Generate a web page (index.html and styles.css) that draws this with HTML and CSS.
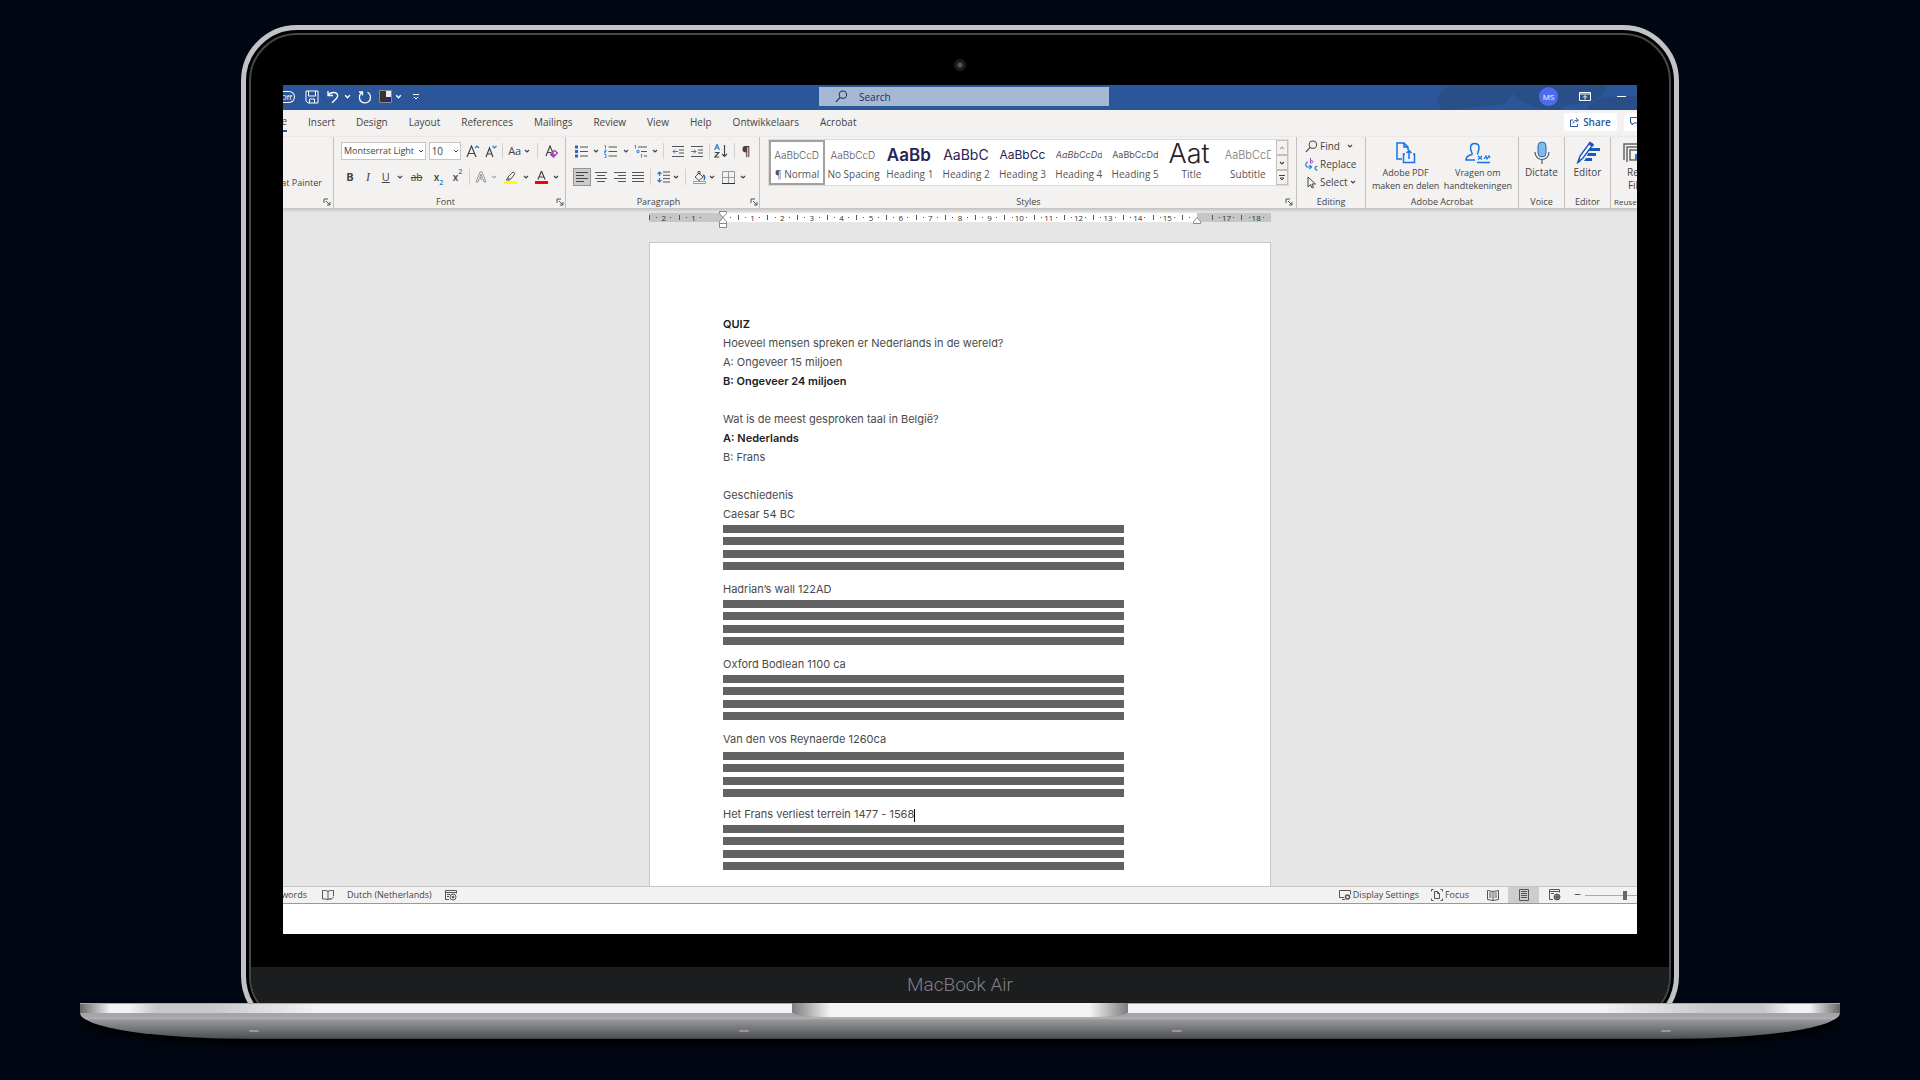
FILE: index.html
```html
<!DOCTYPE html>
<html lang="nl">
<head>
<meta charset="utf-8">
<title>Word - Quiz</title>
<link rel="stylesheet" href="styles.css">
</head>
<body>
<svg class="defs" aria-hidden="true">
  <symbol id="chev" viewBox="0 0 6 6"><path d="M1 2l2 2 2-2" fill="none" stroke="currentColor" stroke-width="1.2"/></symbol>
  <symbol id="launch" viewBox="0 0 8 8"><path d="M1 5V1h4M3 3l4 4M7 4v3H4" fill="none" stroke="#555" stroke-width="1"/></symbol>
  <symbol id="loupe" viewBox="0 0 14 14"><circle cx="8.500" cy="5" r="4" fill="none" stroke="currentColor" stroke-width="1.100"/><path d="M5.600 8L1 12.800" stroke="currentColor" stroke-width="1.200"/></symbol>
</svg>
<main class="laptop">
  <div class="lid-clip">
    <div class="lid">
      <div class="bezel">
        <div class="camera-row"><span class="camera"></span></div>
        <div class="screen">

          <header class="titlebar">
            <div class="quick">
              <button class="off" aria-label="AutoSave"><span>Off</span></button>
              <button class="b w22" aria-label="Save"><svg width="14" height="14" viewBox="0 0 14 14" fill="none" stroke="#fff"><path d="M1 1h12v12H3l-2-2zM3.500 1v5h7V1M4.500 13V9h5v4"/></svg></button>
              <button class="b w20" aria-label="Undo"><svg width="14" height="14" viewBox="0 0 14 14" fill="none" stroke="#fff" stroke-width="1.300"><path d="M2 1v4.500h5M2 5.500C4 2 11 1 11.700 5.500 12 8 9 9.500 6 12.800"/></svg></button>
              <button class="b w8" aria-label="Undo list"><svg width="7" height="7"><use href="#chev"/></svg></button>
              <button class="b w28" aria-label="Redo"><svg width="14" height="14" viewBox="0 0 14 14" fill="none" stroke="#fff" stroke-width="1.300"><path d="M1 2h3.500v3.500M4.200 2.500C0 5 .5 12.600 7 12.800 13.500 12.600 14 5 9.500 2.300"/></svg></button>
              <button class="b w12" aria-label="Theme"><svg width="13" height="13" viewBox="0 0 13 13"><path fill="#3a3232" d="M0 0h13v13H0z"/><path fill="#eee" d="M7 1h5v6H7z"/><path fill="#2b2a6c" d="M7 7h5v5H7z"/><path fill="none" stroke="#8a8a9c" d="M.5.5h12v12H.5z"/></svg></button>
              <button class="b w14" aria-label="Theme list"><svg width="7" height="7"><use href="#chev"/></svg></button>
              <button class="b w22" aria-label="Customize"><svg width="8" height="8" viewBox="0 0 8 8" fill="none" stroke="#fff"><path d="M1 1.500h6M2 4l2 2 2-2"/></svg></button>
            </div>
            <label class="search"><svg width="13" height="13"><use href="#loupe"/></svg><input type="text" placeholder="Search" aria-label="Search"></label>
            <div class="account">
              <svg class="waves" width="200" height="25" viewBox="0 0 200 25" aria-hidden="true"><path d="M4 25C-4 12 4 0 20 0h60c-6 8-8 20-20 20S30 25 4 25zM72 0h98c-4 14-14 18-30 19s-14 6-22 6c-14 0-42-6-46-25zM150 25c4-12 24-15 50-14v14z" fill="#284f88"/></svg>
              <button class="avatar">MS</button>
              <button class="b w32" aria-label="Ribbon display options"><svg width="12" height="9" viewBox="0 0 12 9"><path d="M.5.5h11v8H.5zM.5 2h11M6 7.500V4M4 5.500l2-2 2 2" fill="none" stroke="#fff"/></svg></button>
              <button class="b w32" aria-label="Minimize"><svg width="9" height="3"><path d="M0 1.500h9" stroke="#fff"/></svg></button>
            </div>
          </header>

          <nav class="tabs">
            <a class="home" href="#">e</a>
            <a href="#">Insert</a><a href="#">Design</a><a href="#">Layout</a><a href="#">References</a><a href="#">Mailings</a><a href="#">Review</a><a href="#">View</a><a href="#">Help</a><a href="#">Ontwikkelaars</a><a href="#">Acrobat</a>
            <button class="share"><svg width="9" height="10" viewBox="0 0 9 10" fill="none" stroke="#2b579a"><path d="M3 3H.5v6.500h7V7M3 6.500C3 4 5 3.200 8 3.200M6 1l2.300 2.200L6 5.500"/></svg>Share</button>
            <button class="comments" aria-label="Comments"><svg width="10" height="9" viewBox="0 0 10 9" fill="none" stroke="#2b579a"><path d="M.5.500h9v5.500H4l-2 2V6H.5z"/></svg></button>
          </nav>

          <section class="ribbon">
            <div class="group clipboard">
              <button class="painter">at Painter</button>
              <div class="cap"><svg width="8" height="8"><use href="#launch"/></svg></div>
            </div>

            <div class="group font">
              <div class="row">
                <select class="family" aria-label="Font"><option>Montserrat Light</option></select>
                <select class="size" aria-label="Font size"><option>10</option></select>
                <button class="b w20" aria-label="Grow font"><svg width="14" height="13" viewBox="0 0 14 13" fill="none"><path d="M1 12L5.500 1 10 12M2.500 8.500h6" stroke="#444" stroke-width="1.200"/><path d="M9 3l2-2 2 2" stroke="#2b7cd3" stroke-width="1.200"/></svg></button>
                <button class="b w18" aria-label="Shrink font"><svg width="13" height="13" viewBox="0 0 13 13" fill="none"><path d="M1 12L4.500 3 8 12M2.300 9h4.500" stroke="#444" stroke-width="1.200"/><path d="M7.500 1l2 2 2-2" stroke="#2b7cd3" stroke-width="1.200"/></svg></button>
                <i class="sep w6"></i>
                <button class="b w28 case">Aa<svg width="6" height="6"><use href="#chev"/></svg></button>
                <i class="sep w10"></i>
                <button class="b w18" aria-label="Clear formatting"><svg width="13" height="13" viewBox="0 0 13 13" fill="none"><path d="M1 11L5 1l3 7M2.500 7.500h4" stroke="#444" stroke-width="1.200"/><path d="M5.500 9.500l4-4 3 2.500-4 4z" stroke="#a349b5" stroke-width="1.300"/><path d="M5.500 9.500l2-2 3 2.500-2 2z" fill="#a349b5"/></svg></button>
              </div>
              <div class="row">
                <button class="b w18 bold">B</button>
                <button class="b w18 ital">I</button>
                <button class="b w18 under">U</button>
                <button class="b w10" aria-label="Underline style"><svg width="6" height="6"><use href="#chev"/></svg></button>
                <button class="b w24 strike">ab</button>
                <button class="b w20 scr">x<sub>2</sub></button>
                <button class="b w18 scr">x<sup>2</sup></button>
                <i class="sep w6"></i>
                <button class="b w18" aria-label="Text effects"><svg width="12" height="12" viewBox="0 0 12 12" fill="none"><path d="M1 11L5 1h2l4 10H9L8 8H4l-1 3zM4.700 6.500h2.600L6 3z" stroke="#999"/></svg></button>
                <button class="b w8 dim" aria-label="Text effects list"><svg width="6" height="6"><use href="#chev"/></svg></button>
                <button class="b w24" aria-label="Highlight"><svg width="13" height="13" viewBox="0 0 13 13" fill="none"><path d="M4 6l5-5 2 1.500-4 5.500H4zM4 7L2 9h4" stroke="#555"/><path d="M0 10h13v3H0z" fill="#ff0"/></svg></button>
                <button class="b w8" aria-label="Highlight colours"><svg width="6" height="6"><use href="#chev"/></svg></button>
                <button class="b w22" aria-label="Font colour"><svg width="13" height="13" viewBox="0 0 13 13" fill="none"><path d="M3 8.500L6.500 0 10 8.500M4 6h5" stroke="#444" stroke-width="1.200"/><path d="M0 10h13v3H0z" fill="#f00"/></svg></button>
                <button class="b w8" aria-label="Font colours"><svg width="6" height="6"><use href="#chev"/></svg></button>
              </div>
              <div class="cap">Font<svg width="8" height="8"><use href="#launch"/></svg></div>
            </div>

            <div class="group para">
              <div class="row">
                <button class="b w18" aria-label="Bullets"><svg width="13" height="13" viewBox="0 0 13 13"><path d="M5 2h8M5 6.500h8M5 11h8" stroke="#555"/><path d="M0 .5h3v3H0zM0 5h3v3H0zM0 9.500h3v3H0z" fill="#2b67b3"/></svg></button>
                <button class="b w10" aria-label="Bullet styles"><svg width="6" height="6"><use href="#chev"/></svg></button>
                <button class="b w20" aria-label="Numbering"><svg width="13" height="13" viewBox="0 0 13 13"><path d="M4.500 2H13M4.500 6.500H13M4.500 11H13" stroke="#555"/><path d="M.5.500h1v3M.5 5h1.500v1.500H.5V8H2M.5 9.500H2v3H.5" stroke="#3a86d8" fill="none"/></svg></button>
                <button class="b w10" aria-label="Number styles"><svg width="6" height="6"><use href="#chev"/></svg></button>
                <button class="b w20" aria-label="Multilevel list"><svg width="13" height="13" viewBox="0 0 13 13"><path d="M4 2h9M7 6.500h6M10 11h3" stroke="#555"/><path d="M.5.500h1v3M3 5.500h2v2H3zM7.500 9v3.500" stroke="#3a86d8" fill="none"/></svg></button>
                <button class="b w8" aria-label="Multilevel styles"><svg width="6" height="6"><use href="#chev"/></svg></button>
                <i class="sep w10"></i>
                <button class="b w20" aria-label="Decrease indent"><svg width="12" height="11" viewBox="0 0 12 11"><path d="M0 .5h12M7 4h5M7 7h5M0 10.500h12" stroke="#555"/><path d="M6 5.500H1M3 3.500l-2 2 2 2" stroke="#2b7cd3" fill="none"/></svg></button>
                <button class="b w18" aria-label="Increase indent"><svg width="12" height="11" viewBox="0 0 12 11"><path d="M0 .5h12M7 4h5M7 7h5M0 10.500h12" stroke="#555"/><path d="M0 5.500h5M3 3.500l2 2-2 2" stroke="#2b7cd3" fill="none"/></svg></button>
                <i class="sep w6"></i>
                <button class="b w18" aria-label="Sort"><svg width="14" height="14" viewBox="0 0 14 14" fill="none"><path d="M.5 6L3 .5 5.500 6M1.500 4h3" stroke="#2b7cd3" stroke-width="1.200"/><path d="M.8 8.500h4l-4 4.500h4.400M10.500 1v11.500M8 10l2.500 2.500L13 10" stroke="#444" stroke-width="1.200"/></svg></button>
                <i class="sep w8"></i>
                <button class="b w16 pil">¶</button>
              </div>
              <div class="row">
                <button class="b w18 on" aria-label="Align left"><svg width="12" height="11" viewBox="0 0 12 11"><path d="M0 .5h12M0 3.500h8M0 6.500h12M0 9.500h8" stroke="#444"/></svg></button>
                <button class="b w20" aria-label="Centre"><svg width="12" height="11" viewBox="0 0 12 11"><path d="M0 .5h12M2 3.500h8M0 6.500h12M2 9.500h8" stroke="#555"/></svg></button>
                <button class="b w18" aria-label="Align right"><svg width="12" height="11" viewBox="0 0 12 11"><path d="M0 .5h12M4 3.500h8M0 6.500h12M4 9.500h8" stroke="#555"/></svg></button>
                <button class="b w18" aria-label="Justify"><svg width="12" height="11" viewBox="0 0 12 11"><path d="M0 .5h12M0 3.500h12M0 6.500h12M0 9.500h12" stroke="#555"/></svg></button>
                <i class="sep w6"></i>
                <button class="b w20" aria-label="Line spacing"><svg width="13" height="12" viewBox="0 0 13 12" fill="none"><path d="M6 1h7M6 4.300h7M6 7.600h7M6 11h7" stroke="#555"/><path d="M2.500 1v4M2.500 7v4M.5 3l2-2 2 2M.5 9l2 2 2-2" stroke="#2b7cd3" stroke-width="1.200"/></svg></button>
                <button class="b w6" aria-label="Line spacings"><svg width="6" height="6"><use href="#chev"/></svg></button>
                <i class="sep w12"></i>
                <button class="b w16" aria-label="Shading"><svg width="13" height="13" viewBox="0 0 13 13" fill="none"><path d="M2 6l4-4 4 4-4 3.500zM5 3V.5h2V4" stroke="#555"/><path d="M10 4c2 1 2 3 1 5" stroke="#2b67b3" stroke-width="1.500"/><path d="M.5 10.500h12v2H.5z" stroke="#999" fill="#fff"/></svg></button>
                <button class="b w10" aria-label="Shading colours"><svg width="6" height="6"><use href="#chev"/></svg></button>
                <button class="b w22" aria-label="Borders"><svg width="13" height="13" viewBox="0 0 13 13" fill="none"><path d="M.5 12V.5h12V12M6.500 1v11M1 6.500h11" stroke="#999"/><path d="M0 12.500h13" stroke="#333"/></svg></button>
                <button class="b w8" aria-label="Border styles"><svg width="6" height="6"><use href="#chev"/></svg></button>
              </div>
              <div class="cap">Paragraph<svg width="8" height="8"><use href="#launch"/></svg></div>
            </div>

            <div class="group styles">
              <div class="gallery">
                <button class="style sel"><span class="s body">AaBbCcD</span><span>¶ Normal</span></button>
                <button class="style"><span class="s body">AaBbCcD</span><span>No Spacing</span></button>
                <button class="style"><span class="s h1">AaBb</span><span>Heading 1</span></button>
                <button class="style"><span class="s h2">AaBbC</span><span>Heading 2</span></button>
                <button class="style"><span class="s h3">AaBbCc</span><span>Heading 3</span></button>
                <button class="style"><span class="s h4">AaBbCcDdE</span><span>Heading 4</span></button>
                <button class="style"><span class="s h5">AaBbCcDdE</span><span>Heading 5</span></button>
                <button class="style"><span class="s title">Aat</span><span>Title</span></button>
                <button class="style"><span class="s subt">AaBbCcD</span><span>Subtitle</span></button>
                <div class="scroll">
                  <button class="up" aria-label="Up"><svg width="6" height="6"><use href="#chev"/></svg></button>
                  <button aria-label="Down"><svg width="6" height="6"><use href="#chev"/></svg></button>
                  <button aria-label="More"><svg width="6" height="6" viewBox="0 0 6 6" fill="none" stroke="#444"><path d="M0 .5h6M1 3l2 2 2-2z"/></svg></button>
                </div>
              </div>
              <div class="cap">Styles<svg width="8" height="8"><use href="#launch"/></svg></div>
            </div>

            <div class="group editing">
              <button><svg width="13" height="13"><use href="#loupe"/></svg>Find<svg class="gap" width="6" height="6"><use href="#chev"/></svg></button>
              <button><svg width="13" height="13" viewBox="0 0 13 13" fill="none"><path d="M5.500 0v5M5.500 3c3-1.500 3.500 2.500 0 2" stroke="#a349b5"/><path d="M3 4C0 4 0 9 3 9h3M4.500 7l2 2-2 2M12.500 8.500c-3-1-3.500 4 0 3.500" stroke="#2b7cd3" stroke-width="1.200"/></svg>Replace</button>
              <button><svg width="13" height="13" viewBox="0 0 13 13"><path d="M3 1v10l2.500-2.500L7 12l1.500-.7L7 8h3.500z" fill="none" stroke="#444"/></svg>Select<svg width="6" height="6"><use href="#chev"/></svg></button>
              <div class="cap">Editing</div>
            </div>

            <div class="group acro">
              <div class="bigs">
                <button class="big"><svg width="20" height="22" viewBox="0 0 20 22" fill="none" stroke="#1473e6" stroke-width="1.500"><path d="M6 17H1V1h7l4 4v3M8 1v4h4M9 12H7.500v8.500h11V12H17M13 17V9M10.500 11L13 8.500l2.500 2.500"/></svg>Adobe PDF<br>maken en delen</button>
                <button class="big"><svg width="26" height="22" viewBox="0 0 26 22" fill="none" stroke="#1473e6" stroke-width="1.500"><path d="M10 18H1c0-4 3-4.500 6-5.500 1-1-1.500-3-1.500-6.500 0-6 8.500-6 8.500 0 0 3.500-2.500 5.500-1 6.500M12 20.500h13"/><path d="M13 14l4 3.500M17 14l-4 3.500M19 17l2-3 1 3 2-3 1 2" stroke-width="1.200"/></svg>Vragen om<br>handtekeningen</button>
              </div>
              <div class="cap">Adobe Acrobat</div>
            </div>

            <div class="group one">
              <button class="big"><svg width="16" height="24" viewBox="0 0 16 24"><rect x="4" y="1" width="8" height="15" rx="4" fill="#83b9e8" stroke="#2b67b3"/><path d="M1 11c0 10 14 10 14 0M8 18.500V23" fill="none" stroke="#555" stroke-width="1.200"/></svg>Dictate</button>
              <div class="cap">Voice</div>
            </div>
            <div class="group one">
              <button class="big"><svg width="24" height="24" viewBox="0 0 24 24"><path d="M14 7h10v3H12zM12 12h8v3h-9zM10 17h6v3H8z" fill="#185abd"/><path d="M2 21l2-6L14 1.500l3 2L7 17z" fill="#fff" stroke="#185abd" stroke-width="1.500"/><path d="M14 1l4 3-2 2-4-3z" fill="#185abd"/><path d="M1 23l2-5 2 2z" fill="#185abd"/></svg>Editor</button>
              <div class="cap">Editor</div>
            </div>
            <div class="group reuse">
              <button class="big"><svg width="20" height="20" viewBox="0 0 20 20" fill="none"><path d="M1 17V1h18M4 19V4h16M7 17V7h13v10z" stroke="#666" stroke-width="1.500"/><path d="M12 11h8v6h-8z" fill="#2b7cd3"/></svg>Re<br>Fil</button>
              <div class="cap">Reuse</div>
            </div>
          </section>

          <section class="desk">
            <div class="ruler">
              <span class="out">2</span><span class="out">1</span><span class="zero"><svg class="mark" width="8" height="18" viewBox="0 0 8 18" fill="#fff" stroke="#888"><path d="M.5.500h7v2L4 6.500.5 2.500zM4 6.500l3.500 4v2h-7v-2zM.5 12.500h7v4h-7z"/></svg></span><span>1</span><span>2</span><span>3</span><span>4</span><span>5</span><span>6</span><span>7</span><span>8</span><span>9</span><span>10</span><span>11</span><span>12</span><span>13</span><span>14</span><span>15</span><span class="end"><svg class="mark" width="8" height="18" viewBox="0 0 8 18" fill="#fff" stroke="#888"><path d="M4 6.500l3.500 4v2h-7v-2z"/></svg></span><span class="out">17</span><span class="out">18</span>
            </div>
            <article class="page">
              <p><b>QUIZ</b></p>
              <p>Hoeveel mensen spreken er Nederlands in de wereld?</p>
              <p>A: Ongeveer 15 miljoen</p>
              <p><b>B: Ongeveer 24 miljoen</b></p>
              <p class="blank"></p>
              <p>Wat is de meest gesproken taal in België?</p>
              <p><b>A: Nederlands</b></p>
              <p>B: Frans</p>
              <p class="blank"></p>
              <p>Geschiedenis</p>
              <section class="topic"><p>Caesar 54 BC</p><div class="bars"><i></i><i></i><i></i><i></i></div></section>
              <section class="topic"><p>Hadrian’s wall 122AD</p><div class="bars"><i></i><i></i><i></i><i></i></div></section>
              <section class="topic"><p>Oxford Bodlean 1100 ca</p><div class="bars"><i></i><i></i><i></i><i></i></div></section>
              <section class="topic loose"><p>Van den vos Reynaerde 1260ca</p><div class="bars"><i></i><i></i><i></i><i></i></div></section>
              <section class="topic"><p>Het Frans verliest terrein 1477 - 1568<span class="caret"></span></p><div class="bars"><i></i><i></i><i></i><i></i></div></section>
            </article>
          </section>

          <footer class="status">
            <span class="words">words</span>
            <svg width="12" height="11" viewBox="0 0 12 11" fill="none" stroke="#555"><path d="M6 10V1.500C5 .5 3 .5.5.500V9c3 0 4.500 0 5.500 1 .5-1 2-1 3-1M6 1.500C7 .5 9 .5 11.500.500V6M7.500 8l1.500 1.500L12 6.500"/></svg>
            <span class="lang">Dutch (Netherlands)</span>
            <svg width="12" height="11" viewBox="0 0 12 11" fill="none" stroke="#555"><path d="M4 9.500H.5V.5h11v3M.5 2.500h11M2 4.500h3M2 6.500h2"/><circle cx="8" cy="7" r="3"/><circle cx="8" cy="7" r="1" fill="#555"/></svg>
            <div class="views">
              <button><svg width="12" height="10" viewBox="0 0 12 10" fill="none" stroke="#555"><path d="M5 7.500H.5V.500h11v4M3 9.500h3"/><circle cx="8.500" cy="7" r="2" stroke-width="1.500"/></svg>Display Settings</button>
              <button class="focus"><svg width="12" height="12" viewBox="0 0 12 12" fill="none" stroke="#555"><path d="M2.500.500H.5v2M9.500.500h2v2M.5 9.500v2h2M11.500 9.500v2h-2M3.500 9.500v-7h3l2 2v5zM6.500 2.500v2h2"/></svg>Focus</button>
              <button class="v" aria-label="Read mode"><svg width="12" height="11" viewBox="0 0 12 11" fill="none" stroke="#555"><path d="M6 10.500V1.500L.5.500v9zl5.500-1v-9L6 1.500M2 3h2.500M2 5h2.500M2 7h2.500M7.500 3H10M7.500 5H10M7.500 7H10"/></svg></button>
              <button class="v cur" aria-label="Print layout"><svg width="10" height="12" viewBox="0 0 10 12" fill="none" stroke="#555"><path d="M.5.500h9v11h-9zM2 2.500h6M2 4.500h6M2 6.500h6M2 8.500h6"/></svg></button>
              <button class="v" aria-label="Web layout"><svg width="12" height="12" viewBox="0 0 12 12" fill="none" stroke="#555"><path d="M4 10.500H.5V.5h10v3M.5 2.500h10M2 4.500h3"/><circle cx="8" cy="8" r="3" fill="#888"/><path d="M5 8h6M8 5v6"/></svg></button>
              <span class="minus">−</span>
              <input class="zoom" type="range" min="0" max="100" value="80" aria-label="Zoom">
            </div>
          </footer>
          <div class="taskbar"></div>
        </div>
        <div class="chin">MacBook Air</div>
      </div>
    </div>
  </div>
  <div class="base">
    <div class="edge"></div>
    <div class="notch"></div>
    <div class="feet"><i></i><div class="mid"><i></i><i></i></div><i></i></div>
  </div>
</main>
</body>
</html>
```
FILE: styles.css
```css
* { box-sizing: border-box; }
body {
  margin: 0;
  min-height: 100vh;
  background: #000612;
  font: 10px/12px "Open Sans", "Noto Sans", sans-serif;
  color: #444;
}
button, input, select { font: inherit; color: inherit; margin: 0; }
button { border: 0; padding: 0; background: none; white-space: nowrap; }
a { color: inherit; text-decoration: none; }
p { margin: 0; }
svg { flex: none; display: block; }
.defs { position: absolute; width: 0; height: 0; }

/* laptop */
.laptop { padding-top: 25px; }
.lid-clip { margin: 0 241px; overflow: hidden; }
.lid {
  margin-bottom: -29px;
  padding: 3px;
  border: 5px solid #c2c3c6;
  border-radius: 56px;
  background: #000;
}
.bezel {
  border: 2px solid #46474a;
  border-radius: 48px;
  overflow: hidden;
}
.camera-row { height: 50px; display: flex; justify-content: center; align-items: center; padding-top: 10px; }
.camera { width: 12px; height: 12px; border-radius: 50%; background: radial-gradient(#555 0 2px, #1c1c1c 3px); }
.screen { margin: 0 32px; background: #fff; overflow: hidden; }
.chin {
  margin-top: 33px;
  height: 55px;
  padding-top: 6px;
  background: #1c1d1f;
  color: #808184;
  font: 300 19px/24px Roboto, sans-serif;
  text-align: center;
}
.base {
  position: relative;
  margin: 0 80px;
  height: 36px;
  border-radius: 0 0 170px 170px / 0 0 26px 26px;
  background: linear-gradient(#a4a5a8 0 14px, #b4b5b7 15px, #97989b 17px, #505155 35px, #333 36px);
  box-shadow: 0 6px 8px -2px #000;
}
.edge {
  height: 10px;
  border-top: 1px solid #aaa;
  background: linear-gradient(90deg, #666 0, #f2f2f2 30px, #f2f2f2 50px, #c8c8c8 76px, #c8c8c8 130px, #f3f3f3 240px, #f3f3f3 calc(100% - 240px), #c8c8c8 calc(100% - 130px), #c8c8c8 calc(100% - 76px), #f2f2f2 calc(100% - 50px), #f2f2f2 calc(100% - 30px), #666 100%);
}
.notch {
  position: absolute;
  top: 0;
  left: 50%;
  width: 336px;
  height: 14px;
  margin-left: -168px;
  border-radius: 0 0 30px 30px / 0 0 5px 5px;
  background: linear-gradient(90deg, #7c7c7c, #f3f3f3 38px, #f3f3f3 calc(100% - 38px), #7c7c7c);
}
.feet { display: flex; justify-content: space-between; padding: 17px 169px 0; }
.feet i { width: 10px; height: 2px; border-radius: 1px; background: #999; }
.mid { display: flex; gap: 423px; }

/* title bar */
.titlebar {
  display: grid;
  grid-template-columns: calc(50% - 141px) 290px 1fr;
  align-items: center;
  height: 25px;
  padding-bottom: 2px;
  background: #2b579a;
  color: #fff;
}
.quick { display: flex; align-items: center; }
.off {
  width: 12px;
  height: 12px;
  margin-right: 6px;
  padding-right: 2px;
  border: 1px solid #fff;
  border-left: 0;
  border-radius: 0 6px 6px 0;
  display: flex;
  justify-content: flex-end;
  align-items: center;
  overflow: hidden;
  font-size: 8px;
}
.search {
  display: flex;
  align-items: center;
  gap: 11px;
  height: 19px;
  padding-left: 16px;
  background: #a6b9d4;
  color: #1f2f5c;
}
.search input { flex: 1; min-width: 0; border: 0; padding: 0; background: none; outline: 0; }
.search input::placeholder { color: #1f2f5c; opacity: 1; }
.account { position: relative; display: flex; align-items: center; justify-content: flex-end; height: 23px; padding-right: 4px; }
.waves { position: absolute; right: 0; top: 0; }
.account button { position: relative; }
.avatar { width: 19px; height: 19px; margin-right: 11px; border-radius: 50%; background: #4f6bed; font-size: 8px; }
.account .w32:last-child { margin-left: 8px; width: 24px; }

/* tabs */
.tabs { display: flex; align-items: center; gap: 21px; height: 27px; padding-bottom: 4px; background: #f3f2f1; }
.home { width: 4px; display: flex; justify-content: flex-end; border-bottom: 2px solid #2b579a; padding: 4px 0 3px; overflow: hidden; }
.share, .comments { height: 18px; display: flex; align-items: center; justify-content: center; background: #fff; color: #2b579a; border-radius: 2px; }
.share { margin-left: auto; width: 53px; gap: 4px; font-weight: 600; }
.comments { width: 13px; margin-left: -14px; padding-left: 6px; overflow: hidden; justify-content: flex-start; }

/* ribbon */
.ribbon { position: relative; display: flex; height: 72px; background: #f3f2f1; border-bottom: 1px solid #c8c6c4; box-shadow: 0 1px 3px #bbb; }
.group { position: relative; flex: none; display: flex; flex-direction: column; padding: 4px 6px 0; border-right: 1px solid #c2c0be; }
.cap { position: relative; margin-top: auto; text-align: center; height: 12px; font-size: 9px; }
.cap svg { position: absolute; right: -4px; top: 2px; }
.font .cap, .para .cap { padding-right: 10px; }
.row { display: flex; align-items: center; height: 20px; }
.row + .row { margin-top: 6px; }
.b { display: flex; align-items: center; justify-content: center; height: 18px; }
.w6 { width: 6px; } .w8 { width: 8px; } .w10 { width: 10px; } .w12 { width: 12px; } .w14 { width: 14px; }
.w16 { width: 16px; } .w18 { width: 18px; } .w20 { width: 20px; } .w22 { width: 22px; } .w24 { width: 24px; }
.w28 { width: 28px; } .w32 { width: 32px; }
.sep { height: 16px; background: linear-gradient(#d4d2d0, #d4d2d0) center / 1px 100% no-repeat; }
.on { background: #cdcbc9; border: 1px solid #979593; }
.dim { color: #aaa; }
.clipboard { width: 51px; padding-left: 0; }
.painter { width: 39px; margin-top: 36px; display: flex; justify-content: flex-end; font-size: 9px; }
.font { width: 232px; padding-left: 7px; padding-right: 5px; }
.para { width: 194px; padding-left: 7px; padding-right: 5px; }
.font .row .size { margin-right: 2px; }
.group.styles { flex: 1; min-width: 0; padding: 2px 7px 0 8px; }
.editing { width: 69px; }
.acro { width: 153px; }
.one { width: 46px; }
.reuse { width: 26px; border: 0; overflow: hidden; }
.row select {
  height: 18px;
  padding: 0 2px;
  border: 1px solid #c8c6c4;
  border-radius: 0;
  appearance: none;
  background: #fff url("data:image/svg+xml,%3Csvg xmlns='http://www.w3.org/2000/svg' width='6' height='6'%3E%3Cpath d='M1 2l2 2 2-2' fill='none' stroke='%23444'/%3E%3C/svg%3E") right 1px center no-repeat;
}
.row .family { width: 87px; margin-right: 3px; font-size: 9px; }
.row .size { width: 33px; }
.case { gap: 3px; font-size: 11px; }
.bold { font-weight: 700; font-size: 11px; }
.ital { font: italic 12px "Liberation Serif", serif; }
.under { text-decoration: underline; font-size: 11px; }
.strike { text-decoration: line-through; }
.scr { font-weight: 600; }
.scr sub, .scr sup { font-size: 7px; line-height: 7px; color: #2b7cd3; }
.scr sub { align-self: flex-end; }
.scr sup { align-self: flex-start; }
.pil { font-size: 13px; font-weight: 700; }

.gallery { display: flex; height: 47px; background: #fff; border: 1px solid #dddbd9; }
.style { flex: 1; min-width: 0; padding: 0 5px; display: flex; flex-direction: column; align-items: center; overflow: hidden; color: #555; }
.sel { padding: 0 3px; border: 2px solid #a3a19f; }
.sel .s { height: 26px; }
.s { width: 46px; height: 28px; line-height: 30px; overflow: hidden; text-align: left; font-family: Inter, sans-serif; }
.sel .s.body { line-height: 26px; }
.body { font-size: 10px; font-weight: 300; }
.h1 { font-size: 17px; font-weight: 600; color: #262357; }
.h2 { font-size: 14px; color: #262357; }
.h3 { font-size: 12px; color: #262357; }
.h4 { font-size: 9px; font-style: italic; }
.h5 { font-size: 9px; }
.title { font-size: 27px; font-weight: 300; color: #222; line-height: 28px; }
.subt { font-size: 11px; font-weight: 300; color: #777; }
.scroll { width: 12px; display: grid; grid-template-rows: repeat(3, 1fr); }
.scroll button { display: flex; align-items: center; justify-content: center; border: 1px solid #c2c0be; background: #f3f2f1; }
.scroll .up { color: #aaa; }
.up svg { transform: rotate(180deg); }

.group.editing { padding-top: 0; }
.editing button { display: flex; align-items: center; gap: 2px; height: 18px; padding-left: 2px; }
.gap { margin-left: 5px; }
.bigs { display: flex; justify-content: space-between; }
.big { display: flex; flex-direction: column; align-items: center; text-align: center; line-height: 13px; }
.bigs .big { display: block; font-size: 9px; }
.big svg { height: 24px; margin: 0 auto 1px; }
.reuse .big { align-self: flex-start; margin-left: 6px; }
.reuse .cap { margin-left: -3px; text-align: left; font-size: 8px; }
.group.one { padding-left: 0; padding-right: 0; }

/* document */
.desk { background: #e6e6e6; padding-top: 4px; }
.ruler { display: grid; grid-template-columns: repeat(21, 1fr); width: 622px; height: 9px; margin: 0 auto 20px; color: #333; font-size: 8px; line-height: 9px; text-align: center; }
.ruler span {
  position: relative;
  background:
    linear-gradient(#555, #555) left center / 1px 5px no-repeat,
    linear-gradient(#555, #555) 25% center / 1px 1px no-repeat,
    linear-gradient(#555, #555) 75% center / 1px 1px no-repeat,
    #fff;
}
.ruler .out { background-color: #c6c6c6; }
.ruler .zero { background-color: #fff; box-shadow: inset 15px 0 #c6c6c6; }
.ruler .end { box-shadow: inset -15px 0 #c6c6c6; }
.mark { position: absolute; left: 50%; top: -2px; margin-left: -4px; }
.page {
  width: 622px;
  margin: 0 auto;
  padding: 72px 72px 6px 73px;
  background: #fff;
  border: 1px solid #c8c8c8;
  border-bottom: 0;
  font: 11px/19px Inter, sans-serif;
  color: #4a4a4a;
}
.page b { font-weight: 600; color: #222; }
.blank { height: 19px; }
.topic { height: 75px; }
.bars { display: flex; flex-direction: column; justify-content: space-between; width: 401px; height: 45px; margin-top: 1px; }
.loose .bars { margin-top: 3px; }
.bars i { height: 8px; background: #626262; }
.caret { display: inline-block; width: 1px; height: 13px; background: #000; vertical-align: middle; }

/* status bar */
.status { display: flex; align-items: center; height: 18px; background: #f3f2f1; border-top: 1px solid #c8c6c4; border-bottom: 1px solid #999; font-size: 9px; }
.words { width: 24px; display: flex; justify-content: flex-end; margin-right: 15px; }
.lang { margin: 0 13px 0 13px; }
.views { margin-left: auto; display: flex; align-items: center; height: 16px; }
.views button { display: flex; align-items: center; justify-content: center; gap: 2px; height: 16px; }
.views .focus { margin: 0 8px 0 12px; }
.views .v { width: 31px; }
.cur { background: #cfcdcb; }
.minus { margin: 0 4px 0 4px; font-size: 12px; }
.zoom { appearance: none; width: 52px; height: 8px; background: linear-gradient(#aaa, #aaa) center / 100% 1px no-repeat; }
.zoom::-webkit-slider-thumb { appearance: none; width: 4px; height: 9px; background: #666; }
.taskbar { height: 30px; background: #fff; }
```
